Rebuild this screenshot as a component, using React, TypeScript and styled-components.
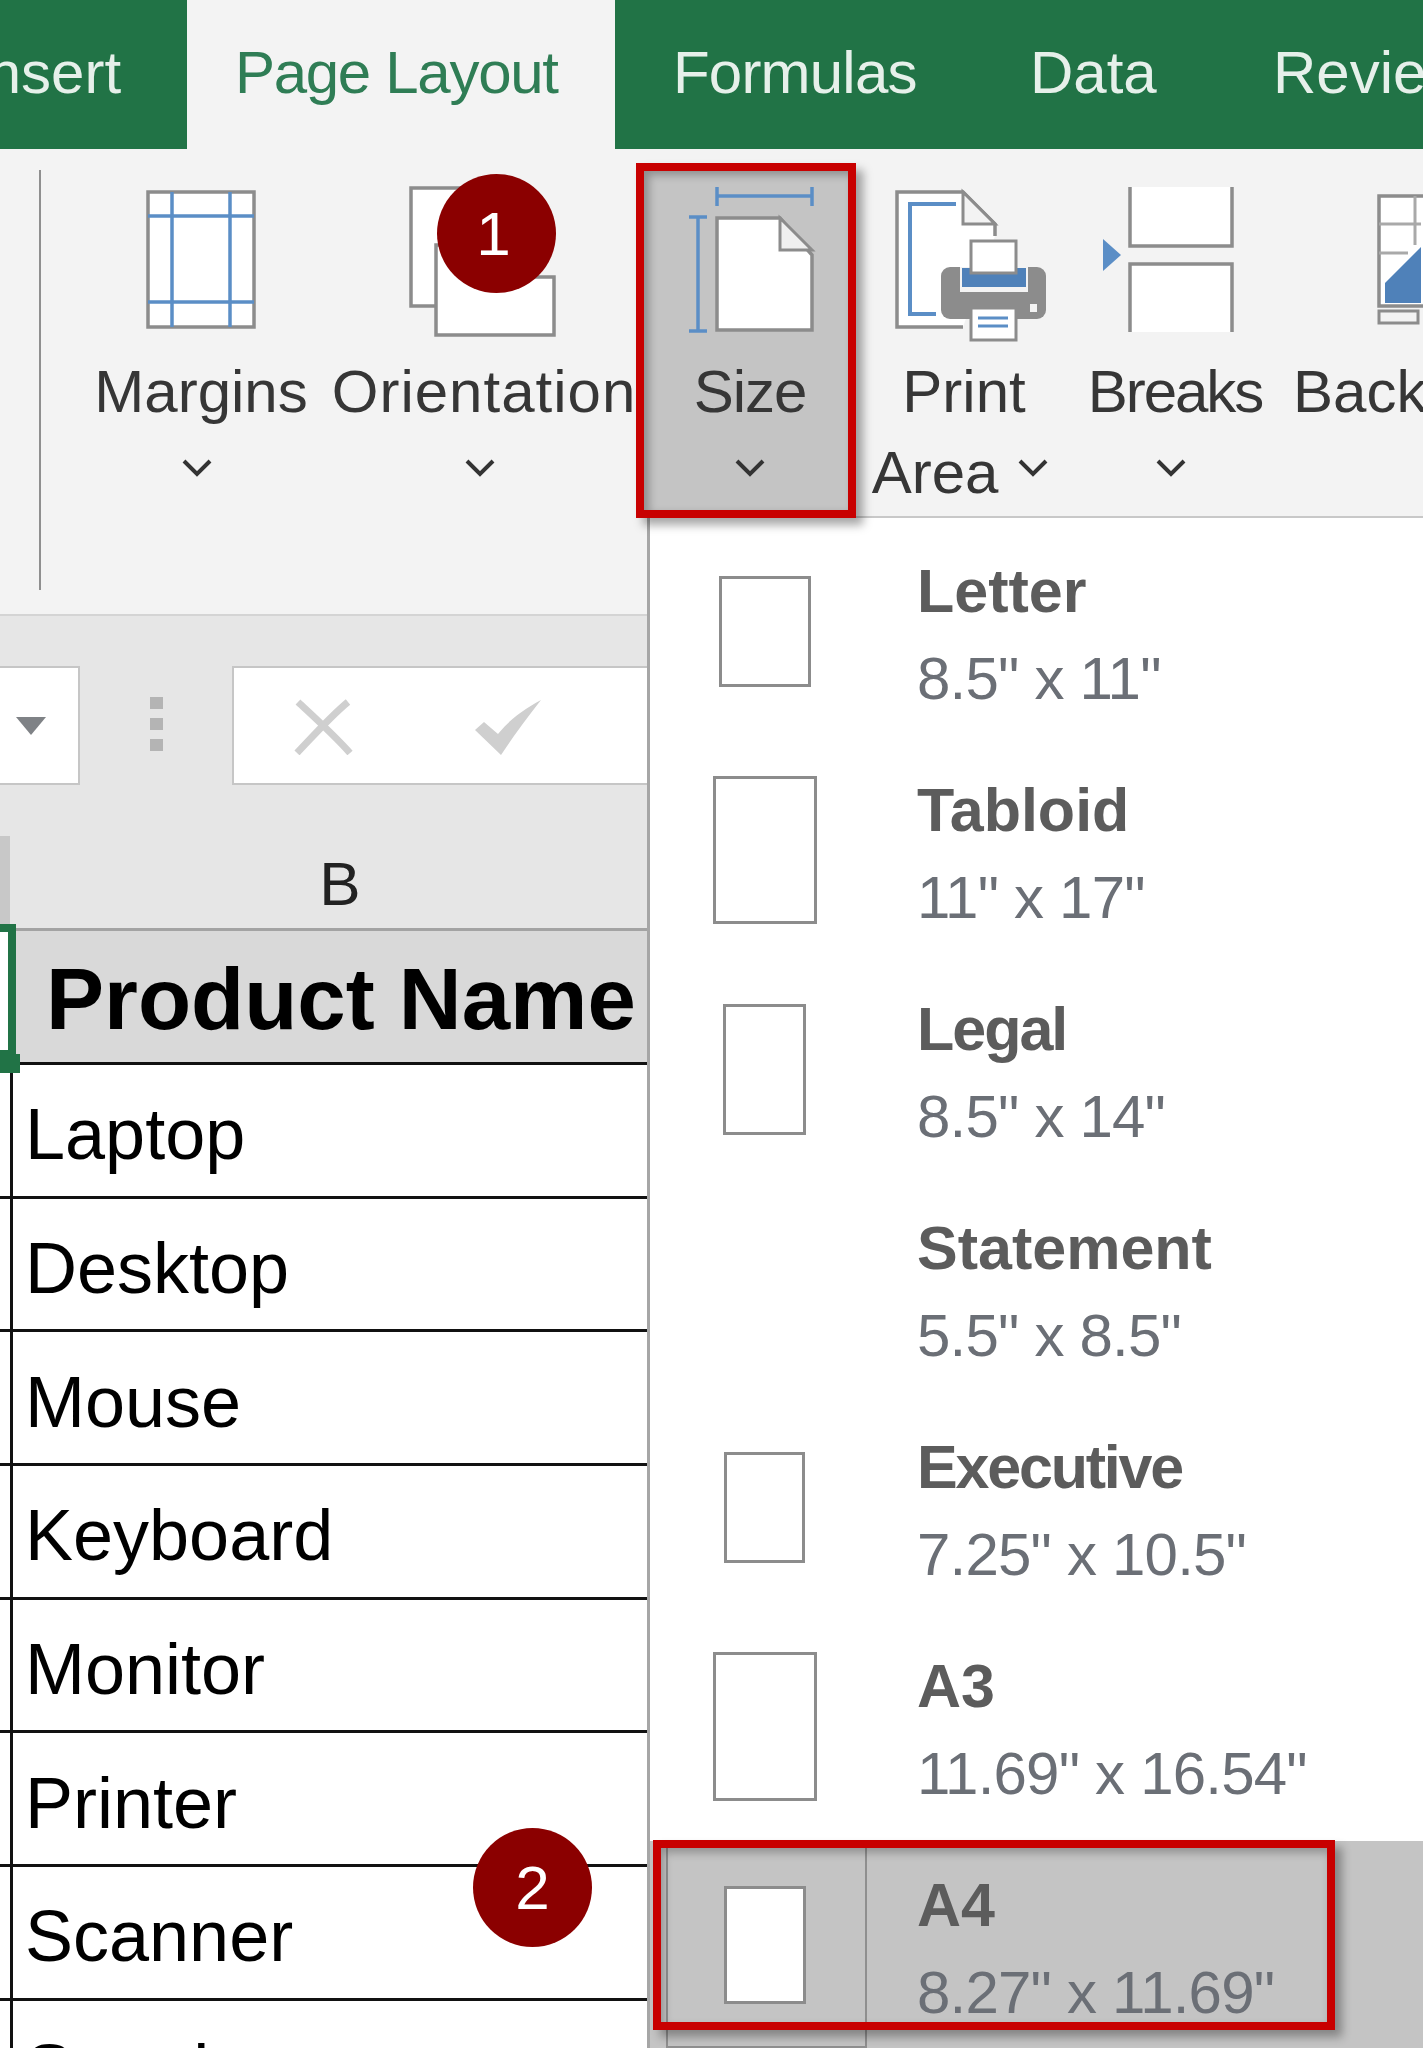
import React from "react";
import styled, { createGlobalStyle } from "styled-components";

const Global = createGlobalStyle`
  html, body { margin: 0; padding: 0; background: #fff; }
  * { box-sizing: border-box; }
`;

const Page = styled.div`
  position: relative;
  width: 1423px;
  height: 2048px;
  overflow: hidden;
  background: #fff;
  font-family: "Liberation Sans", Arial, sans-serif;
  filter: blur(0.7px);
`;

/* ---------- tabs ---------- */
const TabBar = styled.div`
  display: flex;
  height: 149px;
  background: #217346;
  white-space: nowrap;
`;
const Tab = styled.div<{ $w: number; $pl?: number; $ml?: number; $active?: boolean; $spacing?: number }>`
  flex: none;
  width: ${(p) => p.$w}px;
  margin-left: ${(p) => p.$ml ?? 0}px;
  padding-left: ${(p) => p.$pl ?? 0}px;
  font-size: 60px;
  line-height: 145px;
  letter-spacing: ${(p) => p.$spacing ?? 0}px;
  color: ${(p) => (p.$active ? "#2f7d55" : "#e6f0ea")};
  background: ${(p) => (p.$active ? "#f3f3f3" : "transparent")};
`;

/* ---------- ribbon ---------- */
const Ribbon = styled.div`
  display: flex;
  align-items: flex-start;
  height: 465px;
  padding: 14px 0 0 39px;
  background: #f3f3f3;
  white-space: nowrap;
`;
const GroupDivider = styled.div`
  flex: none;
  width: 2px;
  height: 420px;
  margin-top: 7px;
  background: #8f8f8f;
`;
const RibbonButton = styled.div<{ $w: number; $ml: number; $pressed?: boolean; $start?: boolean }>`
  position: relative;
  z-index: ${(p) => (p.$pressed ? 3 : 0)};
  flex: none;
  display: flex;
  flex-direction: column;
  align-items: ${(p) => (p.$start ? "flex-start" : "center")};
  width: ${(p) => p.$w}px;
  height: 355px;
  margin-left: ${(p) => p.$ml}px;
  border: 8px solid ${(p) => (p.$pressed ? "#c80000" : "transparent")};
  background: ${(p) => (p.$pressed ? "#c4c4c4" : "transparent")};
  background-clip: padding-box;
  box-shadow: ${(p) =>
    p.$pressed ? "7px 7px 9px rgba(0,0,0,.35), inset 5px 4px 9px rgba(0,0,0,.28)" : "none"};
`;
const IconSlot = styled.svg`
  flex: none;
  display: block;
  height: 185px;
  overflow: visible;
  align-self: flex-start;
`;
const ButtonLabel = styled.div<{ $spacing?: number; $pl?: number; $ml?: number }>`
  flex: none;
  height: 72px;
  margin-left: ${(p) => p.$ml ?? 0}px;
  padding-left: ${(p) => p.$pl ?? 0}px;
  font-size: 60px;
  line-height: 72px;
  letter-spacing: ${(p) => p.$spacing ?? 0}px;
  color: #363636;
`;
const ChevronRow = styled.div<{ $pl?: number; $pr?: number }>`
  flex: none;
  display: flex;
  align-items: center;
  gap: 20px;
  height: 80px;
  padding-left: ${(p) => p.$pl ?? 0}px;
  padding-right: ${(p) => p.$pr ?? 0}px;
  font-size: 60px;
  color: #363636;
`;
const SecondLine = styled.span`
  line-height: 80px;
  margin-top: 10px;
`;
const ChevronIcon = styled.svg`
  flex: none;
  display: block;
  width: 30px;
  height: 18px;
`;

const Chevron = () => (
  <ChevronIcon viewBox="0 0 30 18">
    <path d="M2 2 L15 15 L28 2" fill="none" stroke="#333" strokeWidth="4" />
  </ChevronIcon>
);

const BLUE = "#5b8ec6";
const GRAY = "#8c8c8c";

const Icon = ({ x, w, children }: { x: number; w: number; children: React.ReactNode }) => (
  <IconSlot width={w} viewBox={`${x} 171 ${w} 185`}>
    {children}
  </IconSlot>
);

const MarginsIcon = () => (
  <Icon x={102} w={198}>
    <rect x="148" y="192" width="106" height="135" fill="#fff" stroke={GRAY} strokeWidth="3.5" />
    <path d="M172 192V327M230 192V327M148 216H254M148 302H254" stroke={BLUE} strokeWidth="3.5" />
  </Icon>
);
const OrientationIcon = () => (
  <Icon x={341} w={286}>
    <rect x="411" y="188" width="90" height="118" fill="#fff" stroke={GRAY} strokeWidth="3.5" />
    <path d="M436 245H500V277H554V335H436Z" fill="#fff" stroke={GRAY} strokeWidth="3.5" />
  </Icon>
);
const SizeIcon = () => (
  <Icon x={645} w={204}>
    <path d="M718 196H813M718 187V206M813 187V206M699 217V331M690 217H708M690 331H708" fill="none" stroke={BLUE} strokeWidth="3.5" />
    <path d="M718 218H781L813 255V330H718Z" fill="#fff" stroke={GRAY} strokeWidth="3.5" />
    <path d="M781 218V250H813Z" fill="#f0f0f0" stroke={GRAY} strokeWidth="3" />
  </Icon>
);
const PrintIcon = () => (
  <Icon x={876} w={176}>
    <path d="M963 327H897V192H963L995 224V236" fill="#fff" stroke={GRAY} strokeWidth="3.5" />
    <path d="M963 192V224H995Z" fill="#f3f3f3" stroke={GRAY} strokeWidth="3" />
    <path d="M956 204H910V314H936" fill="none" stroke={BLUE} strokeWidth="4" />
    <rect x="941" y="267" width="105" height="52" rx="9" fill={GRAY} />
    <rect x="960" y="267" width="68" height="25" fill="#f3f3f3" />
    <rect x="962" y="268" width="64" height="19" fill="#4f81b9" />
    <rect x="971" y="241" width="45" height="32" fill="#fff" stroke={GRAY} strokeWidth="3" />
    <rect x="971" y="308" width="45" height="32" fill="#fff" stroke={GRAY} strokeWidth="3" />
    <path d="M978 318H1008M978 326H1008" stroke={BLUE} strokeWidth="3" />
    <rect x="1030" y="304" width="7" height="8" fill="#f3f3f3" />
  </Icon>
);
const BreaksIcon = () => (
  <Icon x={1096} w={158}>
    <path d="M1103 239L1121 255L1103 271Z" fill={BLUE} />
    <path d="M1130 187V246H1232V187" fill="#fff" stroke={GRAY} strokeWidth="3.5" />
    <path d="M1130 332V264H1232V332" fill="#fff" stroke={GRAY} strokeWidth="3.5" />
  </Icon>
);
const BackgroundIcon = () => (
  <Icon x={1303} w={120}>
    <rect x="1381" y="196" width="60" height="110" fill="#fff" stroke={GRAY} strokeWidth="3.5" />
    <path d="M1381 224H1423M1381 253H1410M1417 196V245" fill="none" stroke="#a9a9a9" strokeWidth="3" />
    <path d="M1387 283L1423 247V303H1387Z" fill="#4f81b9" />
    <rect x="1381" y="311" width="39" height="12" fill="#f3f3f3" stroke={GRAY} strokeWidth="3" />
  </Icon>
);

/* ---------- formula bar + headers ---------- */
const FormulaArea = styled.div`
  height: 317px;
  background: #e6e6e6;
  border-top: 2px solid #d4d4d4;
  border-bottom: 3px solid #a3a3a3;
  padding-top: 50px;
`;
const FormulaRow = styled.div`
  display: flex;
  height: 119px;
`;
const NameBox = styled.div`
  flex: none;
  display: flex;
  align-items: center;
  width: 80px;
  padding: 0 0 0 16px;
  background: #fff;
  border: 2px solid #c6c6c6;
  border-left: none;
`;
const NameArrow = styled.div`
  width: 0;
  height: 0;
  border-left: 15px solid transparent;
  border-right: 15px solid transparent;
  border-top: 18px solid #7f8286;
`;
const Grip = styled.div`
  flex: none;
  display: flex;
  flex-direction: column;
  gap: 9px;
  width: 13px;
  margin: 31px 69px 0 70px;
`;
const GripDot = styled.div`
  height: 12px;
  background: #b4b4b4;
`;
const FormulaBox = styled.div`
  flex: 1;
  position: relative;
  display: flex;
  background: #fff;
  border: 2px solid #c6c6c6;
  padding: 31px 0 0 60px;
  gap: 120px;
  align-items: flex-start;
`;
const FormulaGlyph = styled.svg`
  flex: none;
  display: block;
`;
const HeaderRow = styled.div`
  display: flex;
  align-items: flex-end;
  height: 143px;
`;
const SelectedColumnEdge = styled.div`
  flex: none;
  width: 10px;
  height: 92px;
  background: #c8c8c8;
`;
const ColumnHeader = styled.div`
  flex: none;
  width: 660px;
  height: 100%;
  text-align: center;
  font-size: 62px;
  line-height: 198px;
  color: #222;
`;

/* ---------- sheet ---------- */
const SheetRow = styled.div<{ $head?: boolean }>`
  position: relative;
  display: flex;
  align-items: center;
  height: ${(p) => (p.$head ? 134 : 133.7)}px;
  padding: ${(p) => (p.$head ? 4 : 8)}px 0 0 ${(p) => (p.$head ? 46 : 25)}px;
  background: ${(p) => (p.$head ? "#d9d9d9" : "#fff")};
  border-bottom: 3px solid #111;
  font-size: ${(p) => (p.$head ? 87 : 72)}px;
  font-weight: ${(p) => (p.$head ? 700 : 400)};
  color: #000;
  white-space: nowrap;
  &::before {
    content: "";
    position: absolute;
    left: 0;
    top: 0;
    bottom: -3px;
    width: 10px;
    border-right: 3px solid #111;
  }
`;
const CellSelection = styled.div`
  position: absolute;
  left: -8px;
  top: -7px;
  width: 24px;
  height: 134px;
  border: 8px solid #217346;
  background: #fff;
  z-index: 1;
`;
const FillHandle = styled.div`
  position: absolute;
  left: 0;
  bottom: -11px;
  width: 20px;
  height: 19px;
  background: #217346;
  z-index: 1;
`;

/* ---------- dropdown ---------- */
const Menu = styled.div`
  position: absolute;
  z-index: 2;
  top: 516px;
  left: 647px;
  right: 0;
  bottom: 0;
  overflow: hidden;
  padding-top: 9px;
  background: #fff;
  border-left: 3px solid #a6a6a6;
  border-top: 2px solid #c8c8c8;
`;
const MenuItem = styled.div<{ $selected?: boolean }>`
  position: relative;
  display: flex;
  height: 219px;
  background: ${(p) => (p.$selected ? "#c4c4c4" : "transparent")};
`;
const MenuIconCell = styled.div<{ $selected?: boolean }>`
  flex: none;
  display: flex;
  align-items: center;
  justify-content: center;
  width: 201px;
  height: ${(p) => (p.$selected ? "207px" : "auto")};
  margin-left: 16px;
  padding: 0 4px ${(p) => (p.$selected ? 0 : 11)}px 0;
  border: 2px solid ${(p) => (p.$selected ? "#8f8f8f" : "transparent")};
`;
const PaperShape = styled.div<{ $w: number; $h: number }>`
  width: ${(p) => p.$w}px;
  height: ${(p) => p.$h}px;
  background: #fff;
  border: 3px solid #8c8c8c;
`;
const MenuText = styled.div`
  padding: 20px 0 0 50px;
  white-space: nowrap;
`;
const MenuName = styled.div<{ $spacing?: number }>`
  font-size: 61px;
  font-weight: 700;
  line-height: 88px;
  letter-spacing: ${(p) => p.$spacing ?? 0}px;
  color: #5c5c5c;
`;
const MenuDims = styled.div`
  font-size: 60px;
  line-height: 88px;
  letter-spacing: -0.8px;
  color: #6b6f76;
`;
const RedHighlight = styled.div`
  position: absolute;
  left: 3px;
  top: -1px;
  width: 682px;
  height: 190px;
  border: 8px solid #c80000;
  box-shadow: 7px 7px 9px rgba(0, 0, 0, 0.32), inset 3px 5px 9px rgba(0, 0, 0, 0.25);
`;

/* ---------- annotation badges ---------- */
const Badge = styled.div<{ $x: number; $y: number; $pr?: number }>`
  position: absolute;
  z-index: 5;
  left: ${(p) => p.$x}px;
  top: ${(p) => p.$y}px;
  width: 119px;
  height: 119px;
  padding-right: ${(p) => p.$pr ?? 0}px;
  border-radius: 50%;
  background: #8b0000;
  color: #fff;
  display: flex;
  align-items: center;
  justify-content: center;
  font-size: 62px;
`;

const papers = [
  { name: "Letter", dims: `8.5" x 11"`, w: 92, h: 111 },
  { name: "Tabloid", dims: `11" x 17"`, w: 104, h: 148 },
  { name: "Legal", dims: `8.5" x 14"`, w: 83, h: 131, spacing: -2 },
  { name: "Statement", dims: `5.5" x 8.5"`, w: 0, h: 0 },
  { name: "Executive", dims: `7.25" x 10.5"`, w: 81, h: 111, spacing: -2.2 },
  { name: "A3", dims: `11.69" x 16.54"`, w: 104, h: 149 },
  { name: "A4", dims: `8.27" x 11.69"`, w: 82, h: 118, selected: true },
];
const products = ["Laptop", "Desktop", "Mouse", "Keyboard", "Monitor", "Printer", "Scanner", "Speaker"];

export default function App() {
  return (
    <Page>
      <Global />
      <TabBar>
        <Tab $w={216} $ml={-29}>Insert</Tab>
        <Tab $w={428} $pl={48} $active $spacing={-1.3}>Page Layout</Tab>
        <Tab $w={415} $pl={58} $spacing={-0.8}>Formulas</Tab>
        <Tab $w={243}>Data</Tab>
        <Tab $w={200}>Review</Tab>
      </TabBar>
      <Ribbon>
        <GroupDivider />
        <RibbonButton $w={214} $ml={53}>
          <MarginsIcon />
          <ButtonLabel>Margins</ButtonLabel>
          <ChevronRow $pr={8}><Chevron /></ChevronRow>
        </RibbonButton>
        <RibbonButton $w={302} $ml={25}>
          <OrientationIcon />
          <ButtonLabel $spacing={1}>Orientation</ButtonLabel>
          <ChevronRow $pr={9}><Chevron /></ChevronRow>
        </RibbonButton>
        <RibbonButton $w={220} $ml={1} $pressed>
          <SizeIcon />
          <ButtonLabel $pl={8} $spacing={-1}>Size</ButtonLabel>
          <ChevronRow $pl={8}><Chevron /></ChevronRow>
        </RibbonButton>
        <RibbonButton $w={192} $ml={12}>
          <PrintIcon />
          <ButtonLabel $spacing={0}>Print</ButtonLabel>
          <ChevronRow $pr={8}>
            <SecondLine>Area</SecondLine>
            <Chevron />
          </ChevronRow>
        </RibbonButton>
        <RibbonButton $w={174} $ml={28}>
          <BreaksIcon />
          <ButtonLabel $spacing={-2}>Breaks</ButtonLabel>
          <ChevronRow $pr={8}><Chevron /></ChevronRow>
        </RibbonButton>
        <RibbonButton $w={136} $ml={31} $start>
          <BackgroundIcon />
          <ButtonLabel $ml={-8}>Background</ButtonLabel>
        </RibbonButton>
      </Ribbon>
      <FormulaArea>
        <FormulaRow>
          <NameBox><NameArrow /></NameBox>
          <Grip>
            <GripDot />
            <GripDot />
            <GripDot />
          </Grip>
          <FormulaBox>
            <FormulaGlyph width="60" height="56" viewBox="0 0 60 56">
              <path d="M4 3C20 18 40 36 56 54M54 3C38 16 20 36 3 54" fill="none" stroke="#cfcfcf" strokeWidth="7" />
            </FormulaGlyph>
            <FormulaGlyph width="68" height="56" viewBox="0 0 68 56">
              <path d="M1 31L10 23L24 35C34 22 50 10 67 1C54 18 40 36 27 56Z" fill="#cfcfcf" />
            </FormulaGlyph>
          </FormulaBox>
        </FormulaRow>
        <HeaderRow>
          <SelectedColumnEdge />
          <ColumnHeader>B</ColumnHeader>
        </HeaderRow>
      </FormulaArea>
      <SheetRow $head>
        Product Name
        <CellSelection />
        <FillHandle />
      </SheetRow>
      {products.map((p) => (
        <SheetRow key={p}>{p}</SheetRow>
      ))}
      <Menu>
        {papers.map((p) => (
          <MenuItem key={p.name} $selected={p.selected}>
            <MenuIconCell $selected={p.selected}>
              {p.w > 0 && <PaperShape $w={p.w} $h={p.h} />}
            </MenuIconCell>
            <MenuText>
              <MenuName $spacing={p.spacing}>{p.name}</MenuName>
              <MenuDims>{p.dims}</MenuDims>
            </MenuText>
            {p.selected && <RedHighlight />}
          </MenuItem>
        ))}
      </Menu>
      <Badge $x={437} $y={174} $pr={6}>1</Badge>
      <Badge $x={473} $y={1828}>2</Badge>
    </Page>
  );
}
